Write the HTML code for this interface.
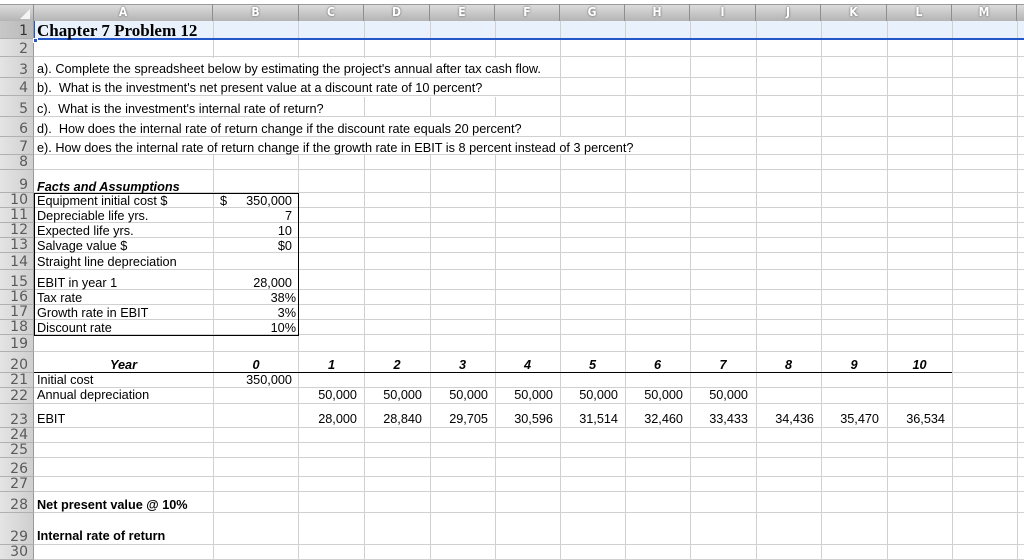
<!DOCTYPE html>
<html><head><meta charset="utf-8">
<style>
*{margin:0;padding:0;box-sizing:border-box}
body{width:1024px;height:560px;overflow:hidden;background:#fff;font-family:"Liberation Sans",Arial,sans-serif;position:relative}
.hdr{position:absolute;top:0;left:0;width:1024px;height:21px;background:#fff;border-bottom:1px solid #888}
.hdr .bar{position:absolute;top:4px;left:0;right:0;height:17px;background:linear-gradient(#dcdcdc,#b4b4b4);border-top:1px solid #9a9a9a}
.ch{position:absolute;top:4px;height:17px;border-right:1px solid #8e8e8e;color:#fff;font:bold 12px "DejaVu Sans Condensed","Liberation Sans",sans-serif;text-align:center;line-height:17px;text-shadow:0 0 2px #555}
.rh{position:absolute;left:0;width:34px;background:linear-gradient(90deg,#e4e4e4,#cfcfcf);border-bottom:1px solid #b0b0b0;border-right:1px solid #999;color:#5a5a5a;font:14px "DejaVu Sans","Liberation Sans",sans-serif;text-align:right;padding-right:5px;display:flex;align-items:flex-end;justify-content:flex-end;line-height:14px}
.hl{position:absolute;left:34px;width:990px;height:1px;background:#d0d0d0}
.vl{position:absolute;top:21px;height:539px;width:1px;background:#d0d0d0}
.t{position:absolute;font-size:12.7px;color:#000;white-space:nowrap;line-height:14px}
.r{text-align:right}
.c{text-align:center}
.bi{font-weight:bold;font-style:italic}
.b{font-weight:bold}
</style></head><body>
<div style="position:absolute;left:34px;top:21px;width:990px;height:18px;background:#e8f1fc"></div>

<div class="vl" style="left:213px"></div><div class="vl" style="left:298px"></div><div class="vl" style="left:364px"></div><div class="vl" style="left:430px"></div><div class="vl" style="left:495px"></div><div class="vl" style="left:560px"></div><div class="vl" style="left:625px"></div><div class="vl" style="left:690px"></div><div class="vl" style="left:756px"></div><div class="vl" style="left:821px"></div><div class="vl" style="left:887px"></div><div class="vl" style="left:952px"></div><div class="vl" style="left:1017px"></div>

<!-- overflow covers -->
<div style="position:absolute;left:212px;top:58px;width:333px;height:39px;background:#fff"></div>
<div style="position:absolute;left:212px;top:96px;width:115px;height:21px;background:#fff"></div>
<div style="position:absolute;left:212px;top:117px;width:312px;height:20px;background:#fff"></div>
<div style="position:absolute;left:212px;top:137px;width:425px;height:18px;background:#fff"></div>

<div id="rows"></div>

<div style="position:absolute;left:34px;top:38px;width:990px;height:2px;background:#2456c8"></div>
<div style="position:absolute;left:34px;top:21px;width:1px;height:19px;background:#2456c8"></div>
<div style="position:absolute;left:33px;top:38px;width:5px;height:5px;background:#2456c8;border:1px solid #fff"></div>

<div class="hdr"><div class="bar"></div>
<div style="position:absolute;left:0;top:4px;width:34px;height:17px;border-right:1px solid #8e8e8e"></div>
<div style="position:absolute;left:20px;top:9px;width:0;height:0;border-left:10px solid transparent;border-bottom:10px solid #f4f4f4"></div>
<div class="ch" style="left:34px;width:179px">A</div>
<div class="ch" style="left:213px;width:86px">B</div>
<div class="ch" style="left:299px;width:65px">C</div>
<div class="ch" style="left:364px;width:66px">D</div>
<div class="ch" style="left:430px;width:65px">E</div>
<div class="ch" style="left:495px;width:65px">F</div>
<div class="ch" style="left:560px;width:65px">G</div>
<div class="ch" style="left:625px;width:65px">H</div>
<div class="ch" style="left:690px;width:66px">I</div>
<div class="ch" style="left:756px;width:65px">J</div>
<div class="ch" style="left:821px;width:66px">K</div>
<div class="ch" style="left:887px;width:65px">L</div>
<div class="ch" style="left:952px;width:65px">M</div>
</div>

<script>
var b=[21,39,57,78,96,117,137,155,170,193,208,223,238,253,270,290,305,320,335,352,373,388,404,428,443,458,477,492,513,545,560];
var h='';
for(var i=0;i<30;i++){var t=b[i],bt=b[i+1];
h+='<div class="rh" style="top:'+t+'px;height:'+(bt-t)+'px;'+(i==0?'background:linear-gradient(90deg,#c8c8c8,#b8b8b8);color:#333':'')+'">'+(i+1)+'</div>';
h+='<div class="hl" style="top:'+(bt-1)+'px"></div>';}
document.getElementById('rows').innerHTML=h;
</script>

<div class="t" style="left:37px;top:21px;font:bold 17px 'Liberation Serif',serif;line-height:19px">Chapter 7 Problem 12</div>

<div class="t" style="left:37px;top:62px">a). Complete the spreadsheet below by estimating the project's annual after tax cash flow.</div>
<div class="t" style="left:37px;top:81px">b).&nbsp; What is the investment's net present value at a discount rate of 10 percent?</div>
<div class="t" style="left:37px;top:102px">c).&nbsp; What is the investment's internal rate of return?</div>
<div class="t" style="left:37px;top:122px">d).&nbsp; How does the internal rate of return change if the discount rate equals 20 percent?</div>
<div class="t" style="left:37px;top:141px">e). How does the internal rate of return change if the growth rate in EBIT is 8 percent instead of 3 percent?</div>

<div class="t bi" style="left:37px;top:180px">Facts and Assumptions</div>
<div style="position:absolute;left:34px;top:193px;width:265px;height:143px;border:1px solid #000"></div>
<div class="t" style="left:37px;top:194px">Equipment initial cost $</div>
<div class="t" style="left:220px;top:194px">$</div>
<div class="t r" style="left:213px;width:79px;top:194px">350,000</div>
<div class="t" style="left:37px;top:209px">Depreciable life yrs.</div><div class="t r" style="left:213px;width:79px;top:209px">7</div>
<div class="t" style="left:37px;top:224px">Expected life yrs.</div><div class="t r" style="left:213px;width:79px;top:224px">10</div>
<div class="t" style="left:37px;top:239px">Salvage value $</div><div class="t r" style="left:213px;width:79px;top:239px">$0</div>
<div class="t" style="left:37px;top:255px">Straight line depreciation</div>
<div class="t" style="left:37px;top:276px">EBIT in year 1</div><div class="t r" style="left:213px;width:79px;top:276px">28,000</div>
<div class="t" style="left:37px;top:291px">Tax rate</div><div class="t r" style="left:213px;width:83px;top:291px">38%</div>
<div class="t" style="left:37px;top:306px">Growth rate in EBIT</div><div class="t r" style="left:213px;width:83px;top:306px">3%</div>
<div class="t" style="left:37px;top:321px">Discount rate</div><div class="t r" style="left:213px;width:83px;top:321px">10%</div>

<div style="position:absolute;left:34px;top:372px;width:918px;height:1px;background:#000"></div>
<div class="t bi c" style="left:34px;width:179px;top:358px">Year</div>
<div class="t bi c" style="left:213px;width:86px;top:358px">0</div>
<div class="t bi c" style="left:299px;width:65px;top:358px">1</div>
<div class="t bi c" style="left:364px;width:66px;top:358px">2</div>
<div class="t bi c" style="left:430px;width:65px;top:358px">3</div>
<div class="t bi c" style="left:495px;width:65px;top:358px">4</div>
<div class="t bi c" style="left:560px;width:65px;top:358px">5</div>
<div class="t bi c" style="left:625px;width:65px;top:358px">6</div>
<div class="t bi c" style="left:690px;width:66px;top:358px">7</div>
<div class="t bi c" style="left:756px;width:65px;top:358px">8</div>
<div class="t bi c" style="left:821px;width:66px;top:358px">9</div>
<div class="t bi c" style="left:887px;width:65px;top:358px">10</div>

<div class="t" style="left:37px;top:373px">Initial cost</div><div class="t r" style="left:213px;width:79px;top:373px">350,000</div>
<div class="t" style="left:37px;top:388px">Annual depreciation</div>
<div class="t r" style="left:299px;width:58px;top:388px">50,000</div>
<div class="t r" style="left:364px;width:58px;top:388px">50,000</div>
<div class="t r" style="left:430px;width:58px;top:388px">50,000</div>
<div class="t r" style="left:495px;width:58px;top:388px">50,000</div>
<div class="t r" style="left:560px;width:58px;top:388px">50,000</div>
<div class="t r" style="left:625px;width:58px;top:388px">50,000</div>
<div class="t r" style="left:690px;width:58px;top:388px">50,000</div>

<div class="t" style="left:37px;top:412px">EBIT</div>
<div class="t r" style="left:299px;width:58px;top:412px">28,000</div>
<div class="t r" style="left:364px;width:58px;top:412px">28,840</div>
<div class="t r" style="left:430px;width:58px;top:412px">29,705</div>
<div class="t r" style="left:495px;width:58px;top:412px">30,596</div>
<div class="t r" style="left:560px;width:58px;top:412px">31,514</div>
<div class="t r" style="left:625px;width:58px;top:412px">32,460</div>
<div class="t r" style="left:690px;width:58px;top:412px">33,433</div>
<div class="t r" style="left:756px;width:58px;top:412px">34,436</div>
<div class="t r" style="left:821px;width:58px;top:412px">35,470</div>
<div class="t r" style="left:887px;width:58px;top:412px">36,534</div>

<div class="t b" style="left:37px;top:498px">Net present value @ 10%</div>
<div class="t b" style="left:37px;top:529px">Internal rate of return</div>
</body></html>
